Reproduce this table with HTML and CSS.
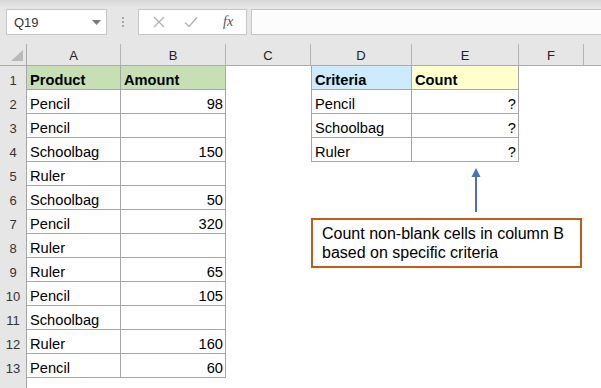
FILE: index.html
```html
<!DOCTYPE html>
<html lang="en">
<head>
    <meta charset="UTF-8">
    <title>Count non-blank cells</title>
    <link rel="stylesheet" href="styles.css">
</head>
<body>
    <div class="toolbar">
        <div class="namebox">
            <span>Q19</span>
            <svg class="caret" width="9" height="5" viewBox="0 0 9 5"><polygon points="0,0 9,0 4.5,5" fill="#7a7a7a"/></svg>
        </div>
        <div class="grip"><i></i><i></i><i></i></div>
        <div class="fxbox">
            <svg class="icon" width="12" height="12" viewBox="0 0 12 12"><path d="M1 1 L11 11 M11 1 L1 11" stroke="#b3b3b3" stroke-width="1.4" fill="none"/></svg>
            <svg class="icon" width="14" height="12" viewBox="0 0 14 12"><path d="M1 6.5 L5 10.5 L13 1.5" stroke="#b3b3b3" stroke-width="1.4" fill="none"/></svg>
            <span class="fx">fx</span>
        </div>
        <div class="formula"></div>
    </div>

    <div class="sheet">
        <div class="grid">
            <div class="corner"><svg width="12" height="11" viewBox="0 0 12 11"><polygon points="12,0 12,11 0,11" fill="#b9b9b9"/></svg></div>
            <div class="ch">A</div>
            <div class="ch">B</div>
            <div class="ch">C</div>
            <div class="ch">D</div>
            <div class="ch">E</div>
            <div class="ch">F</div>
            <div class="ch last"></div>

            <div class="rh">1</div>
            <div class="c t hd green">Product</div>
            <div class="c t hd green">Amount</div>
            <div class="c"></div>
            <div class="c t tl hd blue">Criteria</div>
            <div class="c t hd yellow">Count</div>
            <div class="c span2"></div>

            <div class="rh">2</div>
            <div class="c t">Pencil</div>
            <div class="c t num">98</div>
            <div class="c"></div>
            <div class="c t tl">Pencil</div>
            <div class="c t num">?</div>
            <div class="c span2"></div>

            <div class="rh">3</div>
            <div class="c t">Pencil</div>
            <div class="c t num"></div>
            <div class="c"></div>
            <div class="c t tl">Schoolbag</div>
            <div class="c t num">?</div>
            <div class="c span2"></div>

            <div class="rh">4</div>
            <div class="c t">Schoolbag</div>
            <div class="c t num">150</div>
            <div class="c"></div>
            <div class="c t tl">Ruler</div>
            <div class="c t num">?</div>
            <div class="c span2"></div>

            <div class="rh">5</div>
            <div class="c t">Ruler</div>
            <div class="c t num"></div>
            <div class="c rest"></div>

            <div class="rh">6</div>
            <div class="c t">Schoolbag</div>
            <div class="c t num">50</div>
            <div class="c rest"></div>

            <div class="rh">7</div>
            <div class="c t">Pencil</div>
            <div class="c t num">320</div>
            <div class="c rest"></div>

            <div class="rh">8</div>
            <div class="c t">Ruler</div>
            <div class="c t num"></div>
            <div class="c rest"></div>

            <div class="rh">9</div>
            <div class="c t">Ruler</div>
            <div class="c t num">65</div>
            <div class="c rest"></div>

            <div class="rh">10</div>
            <div class="c t">Pencil</div>
            <div class="c t num">105</div>
            <div class="c rest"></div>

            <div class="rh">11</div>
            <div class="c t">Schoolbag</div>
            <div class="c t num"></div>
            <div class="c rest"></div>

            <div class="rh">12</div>
            <div class="c t">Ruler</div>
            <div class="c t num">160</div>
            <div class="c rest"></div>

            <div class="rh">13</div>
            <div class="c t">Pencil</div>
            <div class="c t num">60</div>
            <div class="c rest"></div>

            <div class="rh">14</div>
            <div class="c"></div>
            <div class="c"></div>
            <div class="c rest"></div>
        </div>

        <svg class="arrow" width="12" height="46" viewBox="0 0 12 46">
            <polygon points="6,0 1.5,9 10.5,9" fill="#4472c4"/>
            <line x1="6" y1="8" x2="6" y2="44" stroke="#4472c4" stroke-width="2"/>
        </svg>
        <div class="callout">Count non-blank cells in column B<br>based on specific criteria</div>
    </div>
</body>
</html>
```

FILE: styles.css
```css
body {
    margin: 0;
    padding: 0;
    background: #fff;
    font-family: "Liberation Sans", Arial, sans-serif;
    overflow: hidden;
}
.toolbar {
    height: 44px;
    box-sizing: border-box;
    padding-top: 9px;
    display: flex;
    align-items: flex-start;
    background: linear-gradient(#d8d8d8, #e6e6e6 8px);
}
.namebox {
    margin-left: 6px;
    width: 101px;
    height: 26px;
    box-sizing: border-box;
    border: 1px solid #c6c6c6;
    background: #fff;
    display: flex;
    align-items: center;
    justify-content: space-between;
    padding: 0 5px 0 7px;
    font-size: 13px;
    color: #333;
}
.grip {
    width: 31px;
    height: 26px;
    display: flex;
    flex-direction: column;
    align-items: center;
    justify-content: center;
    gap: 2px;
}
.grip i {
    width: 2px;
    height: 2px;
    background: #a8a8a8;
}
.fxbox {
    width: 109px;
    height: 26px;
    box-sizing: border-box;
    border: 1px solid #c6c6c6;
    background: #fff;
    display: flex;
    align-items: center;
    padding-left: 14px;
    gap: 19px;
}
.fx {
    font-family: "Liberation Serif", serif;
    font-style: italic;
    font-size: 14px;
    color: #555;
    margin-left: 6px;
}
.formula {
    flex: 1;
    margin-left: 4px;
    height: 26px;
    box-sizing: border-box;
    border: 1px solid #c6c6c6;
    border-right: none;
    background: #fcfcfc;
}
.sheet {
    position: relative;
}
.grid {
    display: grid;
    grid-template-columns: 27px 94px 105px 85px 101px 107px 65px 1fr;
    grid-template-rows: 22px repeat(14, 24px);
}
.grid > div {
    box-sizing: border-box;
}
.corner {
    background: #e6e6e6;
    border-right: 1px solid #ababab;
    border-bottom: 1px solid #ababab;
    display: flex;
    align-items: flex-end;
    justify-content: flex-end;
    padding: 0 3px 4px 0;
}
.ch {
    background: #e6e6e6;
    border-right: 1px solid #b4b4b4;
    border-bottom: 1px solid #ababab;
    font-size: 13px;
    color: #222;
    display: flex;
    align-items: center;
    justify-content: center;
    padding-top: 1px;
}
.ch.last {
    border-right: none;
}
.rh {
    background: #e6e6e6;
    border-right: 1px solid #a6a6a6;
    font-size: 13px;
    color: #333;
    display: flex;
    align-items: flex-end;
    justify-content: center;
    line-height: 17px;
    padding-bottom: 1px;
}
.c {
    font-size: 11pt;
    line-height: 17px;
    color: #000;
    display: flex;
    align-items: flex-end;
    padding: 0 3px 0 3px;
    white-space: nowrap;
}
.t {
    border-right: 1px solid #a6a6a6;
    border-bottom: 1px solid #a6a6a6;
}
.tl {
    border-left: 1px solid #a6a6a6;
}
.num {
    justify-content: flex-end;
    padding-right: 2px;
}
.hd {
    font-weight: bold;
}
.green {
    background: #c6e0b4;
}
.blue {
    background: #ccebff;
}
.yellow {
    background: #ffffcc;
}
.span2 {
    grid-column: span 2;
}
.rest {
    grid-column: span 5;
}
.arrow {
    position: absolute;
    left: 470px;
    top: 124px;
}
.callout {
    position: absolute;
    left: 311px;
    top: 174px;
    width: 271px;
    height: 50px;
    box-sizing: border-box;
    border: 2px solid #c55a11;
    background: #fff;
    padding: 4px 9px;
    font-size: 16px;
    line-height: 19px;
    color: #000;
}
```
